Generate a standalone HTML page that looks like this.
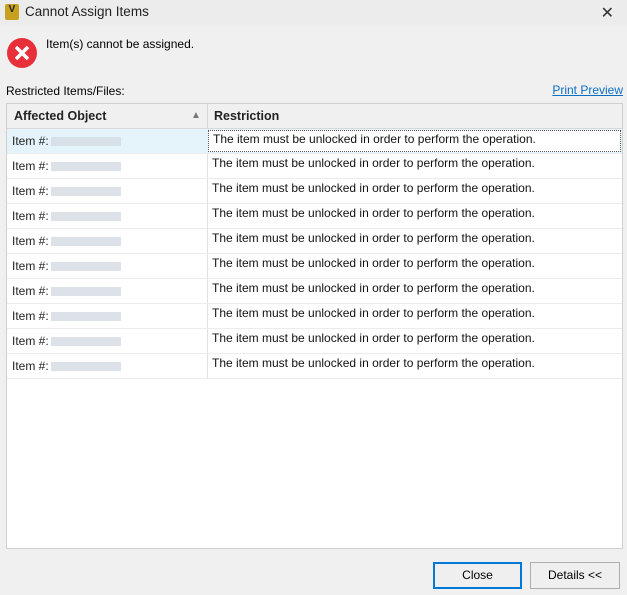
<!DOCTYPE html>
<html><head><style>
*{margin:0;padding:0;box-sizing:border-box}
body{width:627px;height:595px;background:#f0f0f0;font-family:"Liberation Sans",sans-serif;font-size:12px;color:#000;position:relative;overflow:hidden}
.title{position:absolute;left:0;top:0;width:627px;height:25px;background:#ececec}
.title .t{position:absolute;left:25px;top:4px;font-size:13.5px;color:#222}
.logo{position:absolute;left:5px;top:4px;width:14px;height:16px;background:#c8a020;border-radius:2px;color:#222;font-size:10px;font-weight:bold;text-align:center;line-height:12px}
.x{position:absolute;right:13px;top:3px;font-size:16px;color:#333}
.err{position:absolute;left:7px;top:38px;width:30px;height:30px;border-radius:50%;background:#e8303a}
.msg{position:absolute;left:46px;top:37px}
.lbl{position:absolute;left:6px;top:84px}
.pp{position:absolute;right:4px;top:83px;color:#0b6fc4;text-decoration:underline}
.tbl{position:absolute;left:6px;top:103px;width:617px;height:446px;background:#fff;border:1px solid #d0d0d0}
.hd{height:25px;background:#f0f0f0;border-bottom:1px solid #d8d8d8;position:relative;font-weight:bold;font-size:12.5px;color:#222}
.hd span{position:absolute;top:5px}
.row{height:25px;border-bottom:1px solid #ececec;position:relative}
.row span{position:absolute;top:2px}
.row span.c1{top:5px}
.c1{left:5px;color:#222}
.c2{left:205px;color:#111}
.blur{position:absolute;left:44px;top:8px;width:70px;height:9px;background:#d4dbe3;opacity:.8}
.div{position:absolute;left:200px;top:0;width:1px;height:275px;background:#e0e0e0}
.btn{position:absolute;top:562px;height:27px;border:1px solid #adadad;background:#efefef;text-align:center;line-height:25px;font-size:12px}
</style></head><body>
<div class="title"><div class="logo">V</div><div class="t">Cannot Assign Items</div><div class="x">✕</div></div>
<div class="err"><svg width="30" height="30"><path d="M9 9L21 21M21 9L9 21" stroke="#fff" stroke-width="3.5"/></svg></div>
<div class="msg">Item(s) cannot be assigned.</div>
<div class="lbl">Restricted Items/Files:</div>
<div class="pp">Print Preview</div>
<div class="tbl">
<div class="hd"><span style="left:7px">Affected Object</span><span style="left:184px;top:6px;font-size:10px;color:#777">▲</span><span style="left:207px">Restriction</span><div style="position:absolute;left:200px;top:0;width:1px;height:25px;background:#d8d8d8"></div></div>
<div class="div" style="top:25px;height:250px"></div>
<div class="row" style="background:#e5f3fb"><span class="c1">Item #:</span><div class="blur"></div><span class="c2" style="left:201px;top:1px;right:1px;bottom:1px;border:1px dotted #555;padding:1px 4px;background:#fff">The item must be unlocked in order to perform the operation.</span></div>
<div class="row"><span class="c1">Item #:</span><div class="blur"></div><span class="c2">The item must be unlocked in order to perform the operation.</span></div>
<div class="row"><span class="c1">Item #:</span><div class="blur"></div><span class="c2">The item must be unlocked in order to perform the operation.</span></div>
<div class="row"><span class="c1">Item #:</span><div class="blur"></div><span class="c2">The item must be unlocked in order to perform the operation.</span></div>
<div class="row"><span class="c1">Item #:</span><div class="blur"></div><span class="c2">The item must be unlocked in order to perform the operation.</span></div>
<div class="row"><span class="c1">Item #:</span><div class="blur"></div><span class="c2">The item must be unlocked in order to perform the operation.</span></div>
<div class="row"><span class="c1">Item #:</span><div class="blur"></div><span class="c2">The item must be unlocked in order to perform the operation.</span></div>
<div class="row"><span class="c1">Item #:</span><div class="blur"></div><span class="c2">The item must be unlocked in order to perform the operation.</span></div>
<div class="row"><span class="c1">Item #:</span><div class="blur"></div><span class="c2">The item must be unlocked in order to perform the operation.</span></div>
<div class="row"><span class="c1">Item #:</span><div class="blur"></div><span class="c2">The item must be unlocked in order to perform the operation.</span></div>
</div>
<div class="btn" style="left:433px;width:89px;border:2px solid #0078d7;line-height:23px">Close</div>
<div class="btn" style="left:530px;width:90px">Details &lt;&lt;</div>
</body></html>
